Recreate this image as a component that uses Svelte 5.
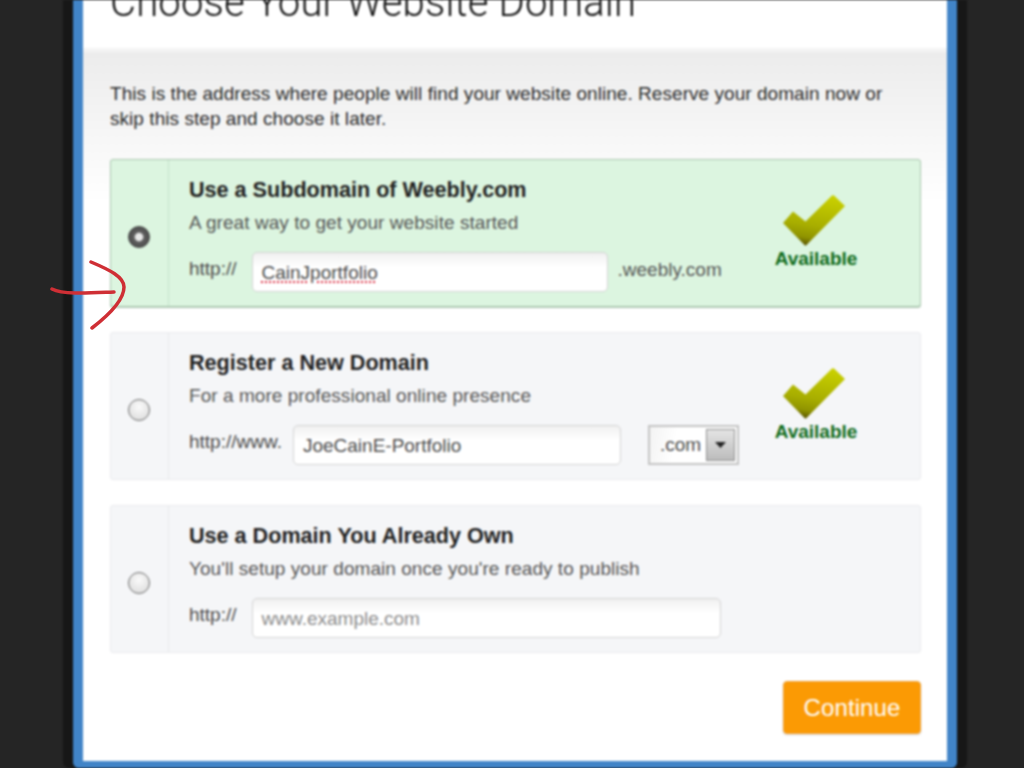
<script>
  const options = [
    { id: 'sub', title: 'Use a Subdomain of Weebly.com', desc: 'A great way to get your website started', prefix: 'http://', value: 'CainJportfolio', kind: 'subdomain', suffix: '.weebly.com', available: true, selected: true },
    { id: 'reg', title: 'Register a New Domain', desc: 'For a more professional online presence', prefix: 'http://www.', value: 'JoeCainE-Portfolio', kind: 'reg', available: true },
    { id: 'own', title: 'Use a Domain You Already Own', desc: "You'll setup your domain once you're ready to publish", prefix: 'http://', value: 'www.example.com', kind: 'own' }
  ];
</script>

<div class="page">
  <main class="modal">
    <header class="head"><h1>Choose Your Website Domain</h1></header>
    <section class="content">
      <p class="intro">This is the address where people will find your website online. Reserve your domain now or skip this step and choose it later.</p>
      <div class="cards">
        {#each options as o (o.id)}
          <article class="card" class:selected={o.selected}>
            <div class="radio-col"><span class="radio" class:on={o.selected}></span></div>
            <div class="body">
              <div class="main">
                <h2>{o.title}</h2>
                <p class="desc">{o.desc}</p>
                <div class="row">
                  <span class="prefix">{o.prefix}</span>
                  <div class="field {o.kind}">
                    {#if o.kind === 'subdomain'}<span class="misspelt">{o.value}</span>{:else}{o.value}{/if}
                  </div>
                  {#if o.suffix}<span class="suffix">{o.suffix}</span>{/if}
                  {#if o.kind === 'reg'}
                    <div class="select">
                      <span>.com</span>
                      <span class="arrow"><svg width="13" height="8" viewBox="0 0 13 8"><path d="M1 1h11L6.500 7z" fill="#222"/></svg></span>
                    </div>
                  {/if}
                </div>
              </div>
              {#if o.available}
                <div class="status">
                  <svg width="64" height="53" viewBox="0 0 64 53">
                    <defs><linearGradient id="chk-{o.id}" x1="0.6" y1="0" x2="0.4" y2="1"><stop offset="0" stop-color="#c9d000"/><stop offset="0.6" stop-color="#a8ae00"/><stop offset="0.85" stop-color="#8f9300"/><stop offset="1" stop-color="#5a5500"/></linearGradient></defs>
                    <path d="M52 1.500 L63 12 L24.500 51 Q23.500 52 22.500 51 L1 29 L11 17.500 L23.500 27.500 L50 1.500 Q51 0.800 52 1.500Z" fill="url(#chk-{o.id})"/>
                  </svg>
                  <span class="avail">Available</span>
                </div>
              {/if}
            </div>
          </article>
        {/each}
      </div>
      <div class="actions"><button type="button">Continue</button></div>
    </section>
  </main>
  <svg class="scribble" width="90" height="80" viewBox="0 0 90 80" fill="none" stroke="#cf2f35" stroke-width="3.500" stroke-linecap="round">
    <path d="M2 29 C14 35 40 33 64 32"/>
    <path d="M41 2 C60 10 74 17 74 27 C74 42 55 58 42 68"/>
  </svg>
</div>

<style>
  :global(body) { margin: 0; background: #252525; }
  .page {
    position: relative;
    width: 1024px;
    height: 768px;
    overflow: hidden;
    background: #252525;
    font-family: "Liberation Sans", Arial, sans-serif;
    display: flex;
    justify-content: center;
  }
  .modal {
    box-sizing: border-box;
    width: 884px;
    height: 768px;
    margin-left: 6px;
    background: #fff;
    border: solid #4184c7;
    border-width: 0 10px 7px;
    border-radius: 0 0 6px 6px;
    box-shadow: 0 0 0 1px #111, -10px 0 0 #171717, 10px 0 0 #171717;
    filter: blur(0.8px);
    display: flex;
    flex-direction: column;
  }
  .head {
    height: 48px;
    flex: none;
    border-bottom: 4px solid #f4f4f4;
    padding-left: 27px;
    overflow: hidden;
  }
  h1 {
    margin: -19px 0 0;
    font: 300 40px/44px Roboto, sans-serif;
    letter-spacing: 0.2px;
    color: #111;
    white-space: nowrap;
  }
  .content {
    flex: 1;
    padding: 29px 26px 0 27px;
    background: linear-gradient(#ececec, #fff 150px);
  }
  .intro {
    margin: 0 0 28px;
    font-size: 19px;
    line-height: 25px;
    letter-spacing: 0.05px;
    color: #2a2a2a;
    width: 790px;
  }
  .cards { display: flex; flex-direction: column; gap: 25px; }
  .card {
    box-sizing: border-box;
    height: 148px;
    display: grid;
    grid-template-columns: 58px 1fr;
    background: #f5f6f8;
    border: 1px solid #eaebed;
    border-radius: 3px;
  }
  .card.selected {
    background: #dcf5e0;
    border-color: #a9c6ae;
    box-shadow: 0 1px 0 #b5ccb9;
  }
  .radio-col {
    display: flex;
    align-items: center;
    justify-content: center;
    border-right: 1px solid #e9eaec;
    padding: 8px 1px 0 0;
  }
  .selected .radio-col { border-right-color: #c5e3cb; }
  .radio {
    box-sizing: border-box;
    width: 22px;
    height: 22px;
    border-radius: 50%;
    border: 1px solid #707070;
    background: radial-gradient(circle at 50% 35%, #fafafa, #d8d8d8);
  }
  .radio.on {
    background: radial-gradient(circle, #e8e8e8 0 3.500px, #5e5e5e 5px, #444 100%);
    border-color: #444;
  }
  .body { display: flex; min-width: 0; }
  .main { flex: 1; padding: 17px 0 0 20px; min-width: 0; }
  h2 {
    margin: 0;
    font-size: 21.600px;
    line-height: 26px;
    font-weight: 700;
    color: #222;
  }
  .desc {
    margin: 7px 0 0;
    font-size: 19px;
    line-height: 26px;
    letter-spacing: 0.05px;
    color: #555;
  }
  .row {
    margin-top: 16px;
    height: 40px;
    display: flex;
    align-items: flex-start;
  }
  .prefix {
    font-size: 19px;
    line-height: 34px;
    color: #4c4c4c;
    margin-right: 15px;
  }
  .field {
    box-sizing: border-box;
    height: 40px;
    padding-left: 9px;
    font-size: 19px;
    line-height: 40px;
    color: #4c4c4c;
    background: linear-gradient(#f0f0f0, #fff 14px);
    border: 1px solid #d4d4d4;
    border-radius: 5px;
  }
  .field.subdomain { width: 356px; }
  .field.reg { width: 328px; margin-left: -4px; margin-right: 27px; }
  .field.own { width: 469px; color: #8c8c8c; }
  .misspelt { text-decoration: underline dotted #d9263a 2px; text-underline-offset: 2px; }
  .suffix {
    margin-left: 10px;
    font-size: 19px;
    line-height: 36px;
    color: #555;
  }
  .select {
    box-sizing: border-box;
    width: 91px;
    height: 40px;
    display: flex;
    align-items: center;
    justify-content: space-between;
    padding: 3px 2px 3px 10px;
    background: linear-gradient(100deg, #f3f3f3, #fff 30%);
    border: 2px solid #c4c4c4;
    font-size: 19px;
    color: #4c4c4c;
  }
  .arrow {
    box-sizing: border-box;
    width: 29px;
    height: 32px;
    display: flex;
    align-items: center;
    justify-content: center;
    background: linear-gradient(#e4e4e4, #bcbcbc);
    border: 1px solid #8f8f8f;
  }
  .status {
    width: 82px;
    margin: 34px 63px 0 0;
    display: flex;
    flex-direction: column;
    align-items: center;
  }
  .status svg { display: block; margin-left: -5px; }
  .avail {
    margin-top: 0;
    font-size: 19px;
    line-height: 24px;
    font-weight: 700;
    color: #0e6a1a;
    white-space: nowrap;
  }
  .actions { display: flex; justify-content: flex-end; margin-top: 28px; }
  button {
    width: 138px;
    height: 53px;
    border: 1px solid #f0a33a;
    border-radius: 4px;
    background: #fb9a04;
    color: #fff;
    font: 400 24px "Liberation Sans", Arial, sans-serif;
    letter-spacing: 0.1px;
    box-shadow: 0 1px 2px #d8d8d8;
  }
  .scribble { position: absolute; left: 50px; top: 260px; }
</style>
